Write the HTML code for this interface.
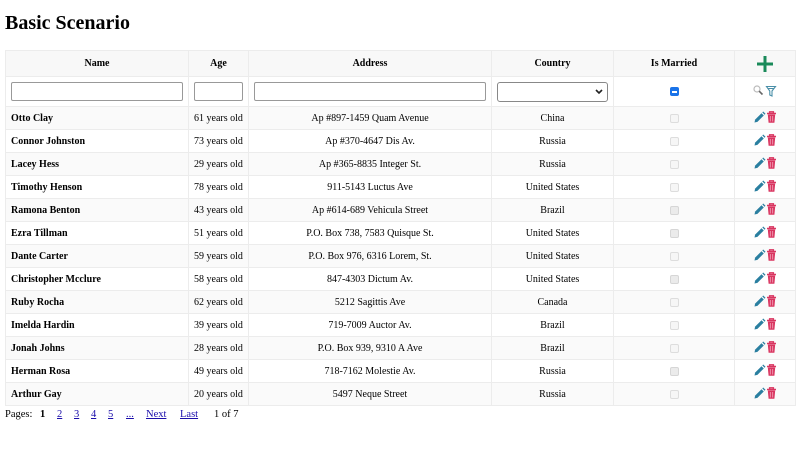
<!DOCTYPE html>
<html><head><meta charset="utf-8"><style>
*{box-sizing:border-box}
body{margin:0;width:800px;height:450px;background:#fff;font-family:"Liberation Serif",serif;font-size:10px;color:#000;position:relative;overflow:hidden}
h1{position:absolute;left:5px;top:12px;margin:0;font-size:20px;font-weight:bold}
table{position:absolute;left:5px;top:50px;width:790px;border-collapse:collapse;table-layout:fixed}
td,th{border:1px solid #ececec;padding:0 5px;white-space:nowrap;overflow:hidden}
td.a{padding:0 0 0 5px;overflow:visible}
th{height:26px;background:#f8f8f8;font-weight:bold;text-align:center}
tr.f td{height:30px;background:#fff}
tr.r td{height:23px}
tr.r:nth-child(odd) td{background:#fafafa}
.c{text-align:center}
.n{font-weight:bold}
.inp{height:19px;border:1px solid #999;border-radius:2px;background:#fff;width:100%}
.sel{height:20px;border:1px solid #888;border-radius:3px;background:#fff;width:100%;position:relative}
.cb{display:inline-block;width:9px;height:9px;border:1px solid #ddd;border-radius:2px;background:#f6f6f6;vertical-align:middle}
.cb.k{background:#ebebeb;border-color:#d6d6d6}
.ic{vertical-align:middle;display:inline-block;margin-top:-2px}
.pg span,.pg a{position:absolute;top:409px;font-size:10.5px;white-space:nowrap}
.pg a{color:#1a0dab;text-decoration:underline}
</style></head><body>
<h1>Basic Scenario</h1>
<table>
<colgroup><col style="width:183px"><col style="width:60px"><col style="width:243px"><col style="width:122px"><col style="width:121px"><col style="width:61px"></colgroup>
<tr><th>Name</th><th>Age</th><th>Address</th><th>Country</th><th>Is Married</th><th><svg width="18" height="18" viewBox="0 0 18 18" style="vertical-align:middle"><path d="M9 1V17M1 9H17" stroke="#1a8a5a" stroke-width="3"/></svg></th></tr>
<tr class="f"><td><div class="inp"></div></td><td><div class="inp"></div></td><td><div class="inp"></div></td><td><div class="sel"><svg style="position:absolute;right:4px;top:6px" width="8" height="6" viewBox="0 0 8 6"><path d="M1 1L4 4L7 1" stroke="#222" stroke-width="1.6" fill="none"/></svg></div></td><td class="c"><span style="display:inline-block;width:9px;height:9px;background:#1a73e8;border-radius:2px;position:relative;vertical-align:middle"><span style="position:absolute;left:2px;top:4px;width:5px;height:1.5px;background:#fff"></span></span></td><td class="c"><svg width="24" height="12" viewBox="0 0 24 12" class="ic"><circle cx="4" cy="4" r="3" fill="none" stroke="#bbb" stroke-width="1.2"/><path d="M6.2 6.2L9.5 9.5" stroke="#666" stroke-width="1.6"/><path d="M13.5 1.5H22.5L19 6V11L16.8 10V6Z" fill="none" stroke="#4a8fa8" stroke-width="1.1"/><path d="M15 3.5H21" stroke="#4a8fa8" stroke-width="1"/></svg></td></tr>
<tr class="r"><td class="n">Otto Clay</td><td class="a">61 years old</td><td class="c">Ap #897-1459 Quam Avenue</td><td class="c">China</td><td class="c"><span class="cb"></span></td><td class="c"><svg width="23" height="12" viewBox="0 0 23 12" class="ic"><path d="M0.5 11.5L1.1 8.6L7.5 2.2L9.8 4.5L3.4 10.9Z" fill="#2a7fa0"/><path d="M8.3 1.4L9.2 0.5L11.5 2.8L10.6 3.7Z" fill="#2a7fa0"/><path d="M13 2.5H22M15.6 2.3V0.8H19.4V2.3" stroke="#d93560" stroke-width="1.4" fill="none"/><path d="M13.8 3.5L14.6 11.8H20.4L21.2 3.5Z" fill="#d93560"/><path d="M16.3 5V10.5M18.7 5V10.5" stroke="#f3a9bd" stroke-width="0.8"/></svg></td></tr>
<tr class="r"><td class="n">Connor Johnston</td><td class="a">73 years old</td><td class="c">Ap #370-4647 Dis Av.</td><td class="c">Russia</td><td class="c"><span class="cb"></span></td><td class="c"><svg width="23" height="12" viewBox="0 0 23 12" class="ic"><path d="M0.5 11.5L1.1 8.6L7.5 2.2L9.8 4.5L3.4 10.9Z" fill="#2a7fa0"/><path d="M8.3 1.4L9.2 0.5L11.5 2.8L10.6 3.7Z" fill="#2a7fa0"/><path d="M13 2.5H22M15.6 2.3V0.8H19.4V2.3" stroke="#d93560" stroke-width="1.4" fill="none"/><path d="M13.8 3.5L14.6 11.8H20.4L21.2 3.5Z" fill="#d93560"/><path d="M16.3 5V10.5M18.7 5V10.5" stroke="#f3a9bd" stroke-width="0.8"/></svg></td></tr>
<tr class="r"><td class="n">Lacey Hess</td><td class="a">29 years old</td><td class="c">Ap #365-8835 Integer St.</td><td class="c">Russia</td><td class="c"><span class="cb"></span></td><td class="c"><svg width="23" height="12" viewBox="0 0 23 12" class="ic"><path d="M0.5 11.5L1.1 8.6L7.5 2.2L9.8 4.5L3.4 10.9Z" fill="#2a7fa0"/><path d="M8.3 1.4L9.2 0.5L11.5 2.8L10.6 3.7Z" fill="#2a7fa0"/><path d="M13 2.5H22M15.6 2.3V0.8H19.4V2.3" stroke="#d93560" stroke-width="1.4" fill="none"/><path d="M13.8 3.5L14.6 11.8H20.4L21.2 3.5Z" fill="#d93560"/><path d="M16.3 5V10.5M18.7 5V10.5" stroke="#f3a9bd" stroke-width="0.8"/></svg></td></tr>
<tr class="r"><td class="n">Timothy Henson</td><td class="a">78 years old</td><td class="c">911-5143 Luctus Ave</td><td class="c">United States</td><td class="c"><span class="cb"></span></td><td class="c"><svg width="23" height="12" viewBox="0 0 23 12" class="ic"><path d="M0.5 11.5L1.1 8.6L7.5 2.2L9.8 4.5L3.4 10.9Z" fill="#2a7fa0"/><path d="M8.3 1.4L9.2 0.5L11.5 2.8L10.6 3.7Z" fill="#2a7fa0"/><path d="M13 2.5H22M15.6 2.3V0.8H19.4V2.3" stroke="#d93560" stroke-width="1.4" fill="none"/><path d="M13.8 3.5L14.6 11.8H20.4L21.2 3.5Z" fill="#d93560"/><path d="M16.3 5V10.5M18.7 5V10.5" stroke="#f3a9bd" stroke-width="0.8"/></svg></td></tr>
<tr class="r"><td class="n">Ramona Benton</td><td class="a">43 years old</td><td class="c">Ap #614-689 Vehicula Street</td><td class="c">Brazil</td><td class="c"><span class="cb k"></span></td><td class="c"><svg width="23" height="12" viewBox="0 0 23 12" class="ic"><path d="M0.5 11.5L1.1 8.6L7.5 2.2L9.8 4.5L3.4 10.9Z" fill="#2a7fa0"/><path d="M8.3 1.4L9.2 0.5L11.5 2.8L10.6 3.7Z" fill="#2a7fa0"/><path d="M13 2.5H22M15.6 2.3V0.8H19.4V2.3" stroke="#d93560" stroke-width="1.4" fill="none"/><path d="M13.8 3.5L14.6 11.8H20.4L21.2 3.5Z" fill="#d93560"/><path d="M16.3 5V10.5M18.7 5V10.5" stroke="#f3a9bd" stroke-width="0.8"/></svg></td></tr>
<tr class="r"><td class="n">Ezra Tillman</td><td class="a">51 years old</td><td class="c">P.O. Box 738, 7583 Quisque St.</td><td class="c">United States</td><td class="c"><span class="cb k"></span></td><td class="c"><svg width="23" height="12" viewBox="0 0 23 12" class="ic"><path d="M0.5 11.5L1.1 8.6L7.5 2.2L9.8 4.5L3.4 10.9Z" fill="#2a7fa0"/><path d="M8.3 1.4L9.2 0.5L11.5 2.8L10.6 3.7Z" fill="#2a7fa0"/><path d="M13 2.5H22M15.6 2.3V0.8H19.4V2.3" stroke="#d93560" stroke-width="1.4" fill="none"/><path d="M13.8 3.5L14.6 11.8H20.4L21.2 3.5Z" fill="#d93560"/><path d="M16.3 5V10.5M18.7 5V10.5" stroke="#f3a9bd" stroke-width="0.8"/></svg></td></tr>
<tr class="r"><td class="n">Dante Carter</td><td class="a">59 years old</td><td class="c">P.O. Box 976, 6316 Lorem, St.</td><td class="c">United States</td><td class="c"><span class="cb"></span></td><td class="c"><svg width="23" height="12" viewBox="0 0 23 12" class="ic"><path d="M0.5 11.5L1.1 8.6L7.5 2.2L9.8 4.5L3.4 10.9Z" fill="#2a7fa0"/><path d="M8.3 1.4L9.2 0.5L11.5 2.8L10.6 3.7Z" fill="#2a7fa0"/><path d="M13 2.5H22M15.6 2.3V0.8H19.4V2.3" stroke="#d93560" stroke-width="1.4" fill="none"/><path d="M13.8 3.5L14.6 11.8H20.4L21.2 3.5Z" fill="#d93560"/><path d="M16.3 5V10.5M18.7 5V10.5" stroke="#f3a9bd" stroke-width="0.8"/></svg></td></tr>
<tr class="r"><td class="n">Christopher Mcclure</td><td class="a">58 years old</td><td class="c">847-4303 Dictum Av.</td><td class="c">United States</td><td class="c"><span class="cb k"></span></td><td class="c"><svg width="23" height="12" viewBox="0 0 23 12" class="ic"><path d="M0.5 11.5L1.1 8.6L7.5 2.2L9.8 4.5L3.4 10.9Z" fill="#2a7fa0"/><path d="M8.3 1.4L9.2 0.5L11.5 2.8L10.6 3.7Z" fill="#2a7fa0"/><path d="M13 2.5H22M15.6 2.3V0.8H19.4V2.3" stroke="#d93560" stroke-width="1.4" fill="none"/><path d="M13.8 3.5L14.6 11.8H20.4L21.2 3.5Z" fill="#d93560"/><path d="M16.3 5V10.5M18.7 5V10.5" stroke="#f3a9bd" stroke-width="0.8"/></svg></td></tr>
<tr class="r"><td class="n">Ruby Rocha</td><td class="a">62 years old</td><td class="c">5212 Sagittis Ave</td><td class="c">Canada</td><td class="c"><span class="cb"></span></td><td class="c"><svg width="23" height="12" viewBox="0 0 23 12" class="ic"><path d="M0.5 11.5L1.1 8.6L7.5 2.2L9.8 4.5L3.4 10.9Z" fill="#2a7fa0"/><path d="M8.3 1.4L9.2 0.5L11.5 2.8L10.6 3.7Z" fill="#2a7fa0"/><path d="M13 2.5H22M15.6 2.3V0.8H19.4V2.3" stroke="#d93560" stroke-width="1.4" fill="none"/><path d="M13.8 3.5L14.6 11.8H20.4L21.2 3.5Z" fill="#d93560"/><path d="M16.3 5V10.5M18.7 5V10.5" stroke="#f3a9bd" stroke-width="0.8"/></svg></td></tr>
<tr class="r"><td class="n">Imelda Hardin</td><td class="a">39 years old</td><td class="c">719-7009 Auctor Av.</td><td class="c">Brazil</td><td class="c"><span class="cb"></span></td><td class="c"><svg width="23" height="12" viewBox="0 0 23 12" class="ic"><path d="M0.5 11.5L1.1 8.6L7.5 2.2L9.8 4.5L3.4 10.9Z" fill="#2a7fa0"/><path d="M8.3 1.4L9.2 0.5L11.5 2.8L10.6 3.7Z" fill="#2a7fa0"/><path d="M13 2.5H22M15.6 2.3V0.8H19.4V2.3" stroke="#d93560" stroke-width="1.4" fill="none"/><path d="M13.8 3.5L14.6 11.8H20.4L21.2 3.5Z" fill="#d93560"/><path d="M16.3 5V10.5M18.7 5V10.5" stroke="#f3a9bd" stroke-width="0.8"/></svg></td></tr>
<tr class="r"><td class="n">Jonah Johns</td><td class="a">28 years old</td><td class="c">P.O. Box 939, 9310 A Ave</td><td class="c">Brazil</td><td class="c"><span class="cb"></span></td><td class="c"><svg width="23" height="12" viewBox="0 0 23 12" class="ic"><path d="M0.5 11.5L1.1 8.6L7.5 2.2L9.8 4.5L3.4 10.9Z" fill="#2a7fa0"/><path d="M8.3 1.4L9.2 0.5L11.5 2.8L10.6 3.7Z" fill="#2a7fa0"/><path d="M13 2.5H22M15.6 2.3V0.8H19.4V2.3" stroke="#d93560" stroke-width="1.4" fill="none"/><path d="M13.8 3.5L14.6 11.8H20.4L21.2 3.5Z" fill="#d93560"/><path d="M16.3 5V10.5M18.7 5V10.5" stroke="#f3a9bd" stroke-width="0.8"/></svg></td></tr>
<tr class="r"><td class="n">Herman Rosa</td><td class="a">49 years old</td><td class="c">718-7162 Molestie Av.</td><td class="c">Russia</td><td class="c"><span class="cb k"></span></td><td class="c"><svg width="23" height="12" viewBox="0 0 23 12" class="ic"><path d="M0.5 11.5L1.1 8.6L7.5 2.2L9.8 4.5L3.4 10.9Z" fill="#2a7fa0"/><path d="M8.3 1.4L9.2 0.5L11.5 2.8L10.6 3.7Z" fill="#2a7fa0"/><path d="M13 2.5H22M15.6 2.3V0.8H19.4V2.3" stroke="#d93560" stroke-width="1.4" fill="none"/><path d="M13.8 3.5L14.6 11.8H20.4L21.2 3.5Z" fill="#d93560"/><path d="M16.3 5V10.5M18.7 5V10.5" stroke="#f3a9bd" stroke-width="0.8"/></svg></td></tr>
<tr class="r"><td class="n">Arthur Gay</td><td class="a">20 years old</td><td class="c">5497 Neque Street</td><td class="c">Russia</td><td class="c"><span class="cb"></span></td><td class="c"><svg width="23" height="12" viewBox="0 0 23 12" class="ic"><path d="M0.5 11.5L1.1 8.6L7.5 2.2L9.8 4.5L3.4 10.9Z" fill="#2a7fa0"/><path d="M8.3 1.4L9.2 0.5L11.5 2.8L10.6 3.7Z" fill="#2a7fa0"/><path d="M13 2.5H22M15.6 2.3V0.8H19.4V2.3" stroke="#d93560" stroke-width="1.4" fill="none"/><path d="M13.8 3.5L14.6 11.8H20.4L21.2 3.5Z" fill="#d93560"/><path d="M16.3 5V10.5M18.7 5V10.5" stroke="#f3a9bd" stroke-width="0.8"/></svg></td></tr>
</table>
<div class="pg"><span style="left:5px">Pages:</span><span style="left:40px;font-weight:bold">1</span><a style="left:57px">2</a><a style="left:74px">3</a><a style="left:91px">4</a><a style="left:108px">5</a><a style="left:126px">...</a><a style="left:146px">Next</a><a style="left:180px">Last</a><span style="left:214px">1 of 7</span></div>
</body></html>
